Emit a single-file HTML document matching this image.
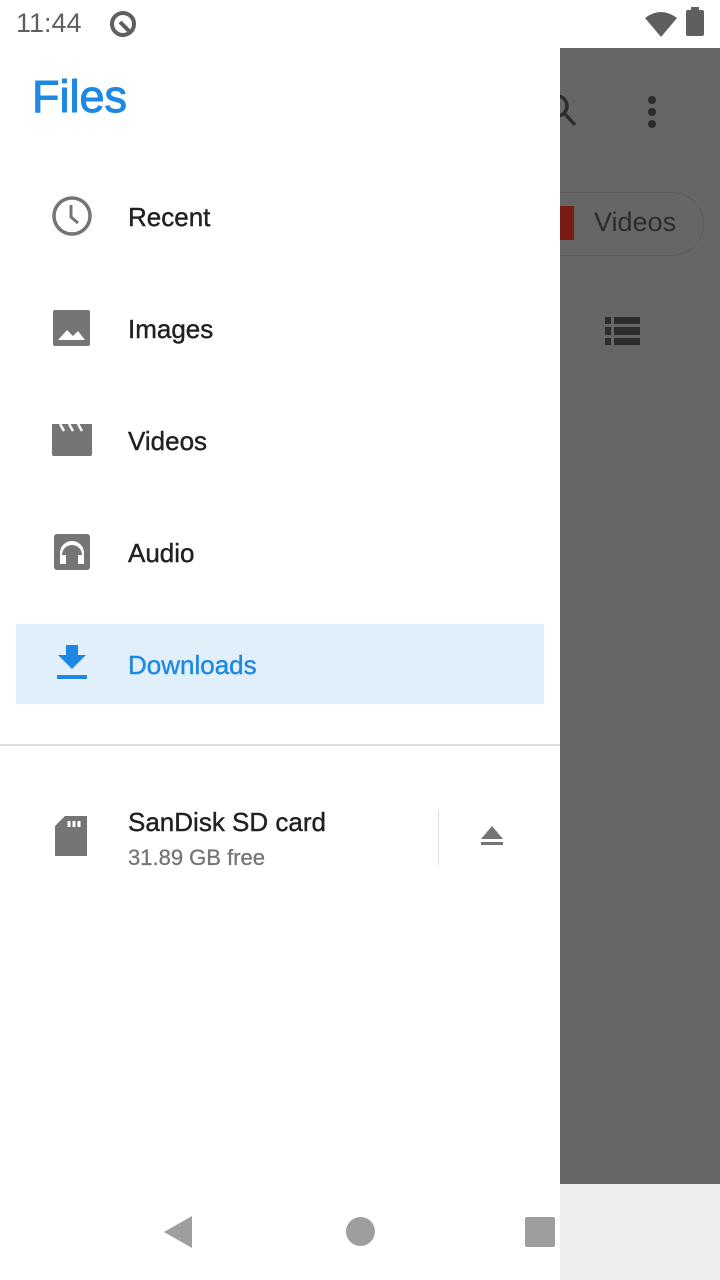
<!DOCTYPE html><html><head><style>
body{margin:0;width:720px;height:1280px;position:relative;overflow:hidden;background:#fff;font-family:"Liberation Sans",Roboto,sans-serif}
.a{position:absolute}
.t{position:absolute;left:128px;font-size:26px;color:#212121;line-height:30px;-webkit-text-stroke:0.4px #212121}
</style></head><body>
<div class="a" style="left:560px;top:48px;width:160px;height:1136px;background:#666"></div>
<div class="a" style="left:560px;top:1184px;width:160px;height:96px;background:#eee"></div>
<svg class="a" style="left:545px;top:90px" width="40" height="40"><circle cx="12" cy="16" r="10" stroke="#2c2c2c" stroke-width="3.5" fill="none"/><line x1="19" y1="23" x2="30" y2="35" stroke="#2c2c2c" stroke-width="3.5"/></svg>
<div class="a" style="left:648px;top:96px;width:8px;height:8px;border-radius:50%;background:#2c2c2c;box-shadow:0 12px 0 #2c2c2c,0 24px 0 #2c2c2c"></div>
<div class="a" style="left:530px;top:192px;width:172px;height:62px;border:1px solid #5c5c5c;border-radius:32px"></div>
<div class="a" style="left:556px;top:206px;width:18px;height:34px;background:#7a1c14"></div>
<div class="a" style="left:594px;top:207px;font-size:27px;color:#2c2c2c">Videos</div>
<svg class="a" style="left:605px;top:317px" width="36" height="30" fill="#2c2c2c"><rect x="0" y="0" width="6" height="7"/><rect x="9" y="0" width="26" height="7"/><rect x="0" y="10" width="6" height="8"/><rect x="9" y="10" width="26" height="8"/><rect x="0" y="21" width="6" height="7"/><rect x="9" y="21" width="26" height="7"/></svg>
<div class="a" style="left:0;top:0;width:560px;height:1280px;background:#fff"></div>
<div class="a" style="left:16px;top:8px;font-size:27px;color:#5f5f5f">11:44</div>
<svg class="a" style="left:108px;top:10px" width="30" height="30"><circle cx="15" cy="14" r="11" stroke="#5f5f5f" stroke-width="4" fill="none"/><line x1="12" y1="12" x2="22" y2="22" stroke="#5f5f5f" stroke-width="4"/></svg>
<svg class="a" style="left:644px;top:10px" width="34" height="28"><path d="M1 8 Q17 -4 33 8 L17 27 Z" fill="#5f5f5f"/></svg>
<div class="a" style="left:686px;top:10px;width:18px;height:26px;background:#5f5f5f;border-radius:2px"></div>
<div class="a" style="left:691px;top:7px;width:8px;height:4px;background:#5f5f5f"></div>
<div class="a" style="left:32px;top:71px;font-size:45px;color:#1e88e5;-webkit-text-stroke:1px #1e88e5">Files</div>
<svg class="a" style="left:51px;top:195px" width="42" height="42"><circle cx="21" cy="21" r="18" stroke="#757575" stroke-width="3.5" fill="none"/><path d="M20 10 V22 L27 28" stroke="#757575" stroke-width="3" fill="none"/></svg>
<div class="t" style="top:202px">Recent</div>
<svg class="a" style="left:53px;top:310px" width="38" height="38"><rect width="37" height="36" rx="2" fill="#757575"/><path d="M5 30 L14 20 L20 26 L25 21 L32 30 Z" fill="#fff"/></svg>
<div class="t" style="top:314px">Images</div>
<svg class="a" style="left:52px;top:424px" width="40" height="32"><rect y="6" width="40" height="26" rx="2" fill="#757575"/><path d="M0 0 H40 V8 H0Z" fill="#757575"/><path d="M8 0 L12 7 M17 0 L21 7 M26 0 L30 7" stroke="#fff" stroke-width="2.5"/></svg>
<div class="t" style="top:426px">Videos</div>
<svg class="a" style="left:54px;top:534px" width="36" height="36"><rect width="36" height="36" rx="3" fill="#757575"/><path d="M6 30 V19 A12 12 0 0 1 30 19 V30 H24 V21 H28 A10 10 0 0 0 8 21 H12 V30 Z" fill="#fff"/></svg>
<div class="t" style="top:538px">Audio</div>
<div class="a" style="left:16px;top:624px;width:528px;height:80px;background:#e1effb;border-radius:2px"></div>
<svg class="a" style="left:56px;top:645px" width="32" height="36"><path d="M10 0 H22 V10 H30 L16 24 L2 10 H10 Z" fill="#1e88e5"/><rect x="1" y="30" width="30" height="4" fill="#1e88e5"/></svg>
<div class="t" style="top:650px;color:#1e88e5;-webkit-text-stroke:0.4px #1e88e5">Downloads</div>
<div class="a" style="left:0;top:744px;width:560px;height:2px;background:#e0e0e0"></div>
<svg class="a" style="left:55px;top:816px" width="34" height="42"><path d="M10 0 H32 V40 H0 V10 Z" fill="#757575"/><path d="M14 5 V11 M19 5 V11 M24 5 V11" stroke="#fff" stroke-width="3"/></svg>
<div class="t" style="top:807px">SanDisk SD card</div>
<div class="a" style="left:128px;top:845px;font-size:22px;color:#757575;-webkit-text-stroke:0.3px #757575">31.89 GB free</div>
<div class="a" style="left:438px;top:810px;width:1px;height:55px;background:#e0e0e0"></div>
<svg class="a" style="left:480px;top:826px" width="24" height="22"><path d="M12 0 L23 13 H1 Z" fill="#757575"/><rect x="1" y="16" width="22" height="3" fill="#757575"/></svg>
<svg class="a" style="left:162px;top:1214px" width="32" height="36"><path d="M30 2 V34 L2 18 Z" fill="#9e9e9e"/></svg>
<div class="a" style="left:346px;top:1217px;width:29px;height:29px;border-radius:50%;background:#9e9e9e"></div>
<div class="a" style="left:525px;top:1217px;width:30px;height:30px;background:#9e9e9e;border-radius:2px"></div>
</body></html>
